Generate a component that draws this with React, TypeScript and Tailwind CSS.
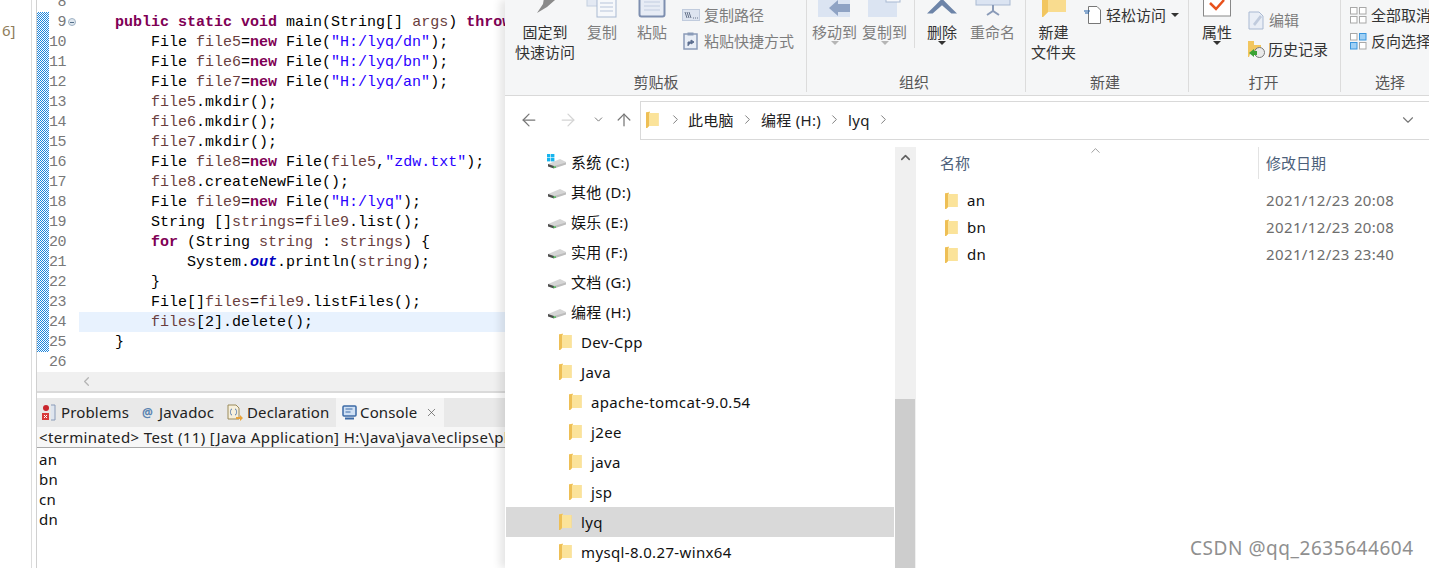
import { ReactNode } from "react";
import { ArrowLeft, ArrowRight, ArrowUp, ChevronDown, ChevronRight, ChevronUp, ChevronLeft, X } from "lucide-react";

const uiFont = "font-['Noto_Sans','Noto_Sans_CJK_SC',sans-serif]";

const Folder = ({ className = "" }: { className?: string }) => (
  <svg width="13" height="18" viewBox="0 0 13 18" className={`shrink-0 ${className}`}>
    <path d="M0 1.5 L4 0.5 L4 2 L12.5 2 L12.5 15 L3 15 L1 17 L0 17 Z" fill="#f3cf72" />
    <path d="M3 2 L12.5 2 L12.5 15 L3 15 Z" fill="#fbe39a" />
    <path d="M0 1.5 L3 1 L3 15 L1 17 L0 17 Z" fill="#eebf55" />
  </svg>
);

const Drive = ({ windows = false }: { windows?: boolean }) => (
  <svg width="20" height="16" viewBox="0 0 20 16" className="shrink-0">
    <path d="M1 10 L13 5 L19 8 L19 10 L7 14 L1 12 Z" fill="#d6d6d6" />
    <path d="M1 10 L7 12 L7 14.5 L1 12.5 Z" fill="#4d4d4d" />
    <path d="M7 12 L19 8.5 L19 10.5 L7 14.5 Z" fill="#bdbdbd" />
    <rect x="6" y="12.5" width="3" height="1.2" fill="#3fb54a" />
    {windows && (
      <g fill="#16b4ee">
        <rect x="0" y="0" width="3.4" height="3.4" />
        <rect x="4" y="0" width="3.4" height="3.4" />
        <rect x="0" y="4" width="3.4" height="3.4" />
        <rect x="4" y="4" width="3.4" height="3.4" />
      </g>
    )}
  </svg>
);

const Caret = ({ gray = false }: { gray?: boolean }) => (
  <span className={`block w-0 h-0 border-x-[4px] border-x-transparent border-t-[4px] ${gray ? "border-t-[#b5b5b5]" : "border-t-[#333]"}`} />
);

const BigButton = ({ lines, icon, width, margin, gray, caret }: { lines: string[]; icon: ReactNode; width: string; margin: string; gray?: boolean; caret?: boolean }) => (
  <div className={`flex flex-col items-center shrink-0 ${width} ${margin}`}>
    <div className="h-[22px] w-full flex justify-center items-start overflow-hidden">{icon}</div>
    {lines.map((l) => (
      <div key={l} className={`h-5 leading-5 whitespace-nowrap ${gray ? "text-[#7d7d7d]" : "text-[#333]"}`}>{l}</div>
    ))}
    {caret && <div className="mt-[-1px]"><Caret gray={gray} /></div>}
  </div>
);

const SmallButton = ({ icon, label, gray, after }: { icon: ReactNode; label: string; gray?: boolean; after?: ReactNode }) => (
  <div className={`flex items-center gap-[4px] whitespace-nowrap ${gray ? "text-[#7d7d7d]" : "text-[#333]"}`}>
    {icon}
    <span className="leading-5">{label}</span>
    {after}
  </div>
);

const Group = ({ width, label, shift = "", children }: { width: string; label: string; shift?: string; children: ReactNode }) => (
  <div className={`shrink-0 h-[92px] flex flex-col border-r border-[#dcdcdc] ${width}`}>
    <div className="h-[72px] flex items-start">{children}</div>
    <div className={`h-5 leading-5 text-center text-[#555] ${shift}`}>{label}</div>
  </div>
);

const Ribbon = () => (
  <div className="h-[96px] shrink-0 bg-[#f5f6f7] border-b border-[#d9d9d9] flex overflow-hidden text-[15px] pl-px">
    <Group width="w-[301px]" label="剪贴板">
      <BigButton
        lines={["固定到", "快速访问"]}
        width="w-[60px]"
        margin="ml-[9px]"
        icon={
          <svg width="24" height="14" viewBox="0 0 24 14">
            <path d="M12 -8 L22 0 L14 7 L4 13 L10 4 Z" fill="#8a8a8a" />
          </svg>
        }
      />
      <BigButton
        lines={["复制"]}
        gray
        width="w-[40px]"
        margin="ml-[7px]"
        icon={
          <svg width="32" height="18" viewBox="0 0 32 18">
            <rect x="1" y="-8" width="20" height="14" fill="#e3e9f3" stroke="#c4cfe0" />
            <rect x="11" y="-4" width="19" height="21" fill="#f6f8fb" stroke="#a9b9d2" />
            <path d="M14 3H27M14 7H27M14 11H27" stroke="#b7c4da" />
          </svg>
        }
      />
      <BigButton
        lines={["粘贴"]}
        gray
        width="w-[40px]"
        margin="ml-[10px]"
        icon={
          <svg width="28" height="18" viewBox="0 0 28 18">
            <rect x="1.5" y="-6" width="25" height="22.5" rx="2" fill="#e7ecf5" stroke="#7e8fb0" strokeWidth="2" />
            <path d="M6 2H22M6 6H22M6 10H22" stroke="#c2cde0" />
          </svg>
        }
      />
      <div className="ml-[10px] flex flex-col gap-[6px] pt-[5px]">
        <SmallButton
          gray
          label="复制路径"
          icon={
            <svg width="18" height="12" viewBox="0 0 18 12">
              <rect x="0.5" y="0.5" width="17" height="11" fill="#dde4f0" stroke="#c0cbdd" />
              <path d="M3 3l2 6M5 3l2 6M7 3l2 6" stroke="#66738a" />
              <path d="M11 9h1M13 9h1M15 9h1" stroke="#66738a" />
            </svg>
          }
        />
        <SmallButton
          gray
          label="粘贴快捷方式"
          icon={
            <svg width="16" height="18" viewBox="0 0 16 18" className="mr-[1px] ml-px">
              <rect x="1" y="2" width="13" height="15" fill="#e9eef6" stroke="#8a9bb8" strokeWidth="1.5" />
              <rect x="4.5" y="0.5" width="6" height="3" fill="#8a9bb8" />
              <path d="M5 14 V10 H9 M8 8 L11 10 L8 12 Z" fill="#5d6f8f" stroke="#5d6f8f" />
            </svg>
          }
        />
      </div>
    </Group>
    <Group width="w-[219px]" label="组织" shift="pr-[4px]">
      <BigButton
        lines={["移动到"]}
        gray
        caret
        width="w-[45px]"
        margin="ml-[5px]"
        icon={
          <svg width="34" height="18" viewBox="0 0 34 18">
            <rect x="0" y="-4" width="32" height="21" fill="#dbe4f2" />
            <path d="M11 8 L20 0 L20 4 L32 4 L32 12 L20 12 L20 16 Z" fill="#8fa3c4" />
          </svg>
        }
      />
      <BigButton
        lines={["复制到"]}
        gray
        caret
        width="w-[45px]"
        margin="ml-[5px]"
        icon={
          <svg width="34" height="18" viewBox="0 0 34 18">
            <rect x="0" y="-4" width="29" height="21" fill="#dbe4f2" />
            <rect x="18" y="-4" width="14" height="6" fill="#f6f8fb" stroke="#a9b9d2" />
          </svg>
        }
      />
      <div className="w-px h-[48px] bg-[#dcdcdc] ml-[7px] shrink-0" />
      <BigButton
        lines={["删除"]}
        caret
        width="w-[30px]"
        margin="ml-[12px]"
        icon={
          <svg width="32" height="15" viewBox="0 0 32 15">
            <path d="M0 14 L9 5 L16 -2 L23 5 L32 14 L26 14 L16 5 L6 14 Z" fill="#6d84a8" />
          </svg>
        }
      />
      <BigButton
        lines={["重命名"]}
        gray
        width="w-[45px]"
        margin="ml-[13px]"
        icon={
          <svg width="36" height="16" viewBox="0 0 36 16">
            <rect x="1" y="-6" width="34" height="11" fill="#dbe4f2" stroke="#a9b9d2" />
            <path d="M18 5V12M12 15L18 11L24 15" stroke="#8a9bb8" strokeWidth="2" fill="none" />
          </svg>
        }
      />
    </Group>
    <Group width="w-[163px]" label="新建" shift="pr-[4px]">
      <BigButton
        lines={["新建", "文件夹"]}
        width="w-[45px]"
        margin="ml-[5px]"
        icon={
          <svg width="24" height="18" viewBox="0 0 24 18">
            <path d="M0 -2 H24 V12 H6 L1 17 H0 Z" fill="#f9dc8f" />
            <path d="M0 -2 H6 V12 L1 17 H0 Z" fill="#f2c65f" />
          </svg>
        }
      />
      <div className="ml-[8px] pt-[5px]">
        <SmallButton
          label="轻松访问"
          after={<span className="ml-[1px]"><Caret /></span>}
          icon={
            <svg width="18" height="20" viewBox="0 0 18 20" className="mr-0">
              <path d="M4.5 1.5 H13 L16.5 5 V18.5 H4.5 Z" fill="#fff" stroke="#777" />
              <path d="M0 6H6M1 8H5" stroke="#1f5ea8" strokeWidth="1" />
            </svg>
          }
        />
      </div>
    </Group>
    <Group width="w-[152px]" label="打开" shift="pr-[2px]">
      <BigButton
        lines={["属性"]}
        caret
        width="w-[30px]"
        margin="ml-[13px]"
        icon={
          <svg width="30" height="18" viewBox="0 0 30 18">
            <rect x="1.5" y="-6" width="27" height="22" fill="#fff" stroke="#888" />
            <path d="M8 3 L14 9 L22 0" stroke="#e8521d" strokeWidth="2.5" fill="none" />
          </svg>
        }
      />
      <div className="ml-[16px] flex flex-col gap-[9px] pt-[10px]">
        <SmallButton
          gray
          label="编辑"
          icon={
            <svg width="16" height="19" viewBox="0 0 16 19" className="mr-[1px]">
              <path d="M1 1 H11 L15 5 V18 H1 Z" fill="#e9eef6" stroke="#a9b9d2" />
              <path d="M5 13 L12 4 L14 6 L7 15 Z" fill="#c0cbdd" />
            </svg>
          }
        />
        <SmallButton
          label="历史记录"
          icon={
            <svg width="17" height="19" viewBox="0 0 17 19" className="mr-[-1px]">
              <path d="M0 1 H6 V5 H13 V12 H3 L1 17 H0 Z" fill="#f2c65f" />
              <circle cx="11.5" cy="12.5" r="5" fill="#e9e9e9" stroke="#777" />
              <path d="M1 13 L6 9 V11 H9 V15 H6 V17 Z" fill="#3aa335" />
            </svg>
          }
        />
      </div>
    </Group>
    <div className="ml-[9px] flex flex-col gap-[6px] pt-[5px] shrink-0 h-[92px] relative">
      <SmallButton
        label="全部取消"
        icon={
          <svg width="17" height="17" viewBox="0 0 17 17">
            <g fill="#fff" stroke="#a8a8a8">
              <rect x="0.5" y="0.5" width="6.5" height="6.5" />
              <rect x="9.5" y="0.5" width="6.5" height="6.5" />
              <rect x="0.5" y="9.5" width="6.5" height="6.5" />
              <rect x="9.5" y="9.5" width="6.5" height="6.5" />
            </g>
          </svg>
        }
      />
      <SmallButton
        label="反向选择"
        icon={
          <svg width="17" height="17" viewBox="0 0 17 17">
            <rect x="0.5" y="0.5" width="6.5" height="6.5" fill="#fff" stroke="#a8a8a8" />
            <rect x="9.5" y="0.5" width="6.5" height="6.5" fill="#9fd0f5" stroke="#3a96dd" />
            <rect x="0.5" y="9.5" width="6.5" height="6.5" fill="#9fd0f5" stroke="#3a96dd" />
            <rect x="9.5" y="9.5" width="6.5" height="6.5" fill="#fff" stroke="#a8a8a8" />
          </svg>
        }
      />
      <div className="absolute left-[25px] top-[72px] h-5 leading-5 text-[#555]">选择</div>
    </div>
  </div>
);

const Crumb = ({ label }: { label: string }) => (
  <>
    <span className="text-[#222] leading-5 tracking-[0.3px]">{label}</span>
    <ChevronRight size={15} strokeWidth={1.5} className="text-[#777] mx-[6px]" />
  </>
);

const AddressBar = () => (
  <div className="h-[51px] shrink-0 flex pt-[5px] bg-white text-[15px]">
    <div className="w-[135px] flex items-center h-[37px] shrink-0 text-[#777]">
      <ArrowLeft size={20} strokeWidth={1.5} className="ml-[14px]" />
      <ArrowRight size={20} strokeWidth={1.5} className="ml-[19px] text-[#d4d4d4]" />
      <ChevronDown size={13} strokeWidth={1.8} className="ml-[14px]" />
      <ArrowUp size={20} strokeWidth={1.5} className="ml-[9px]" />
    </div>
    <div className="flex-1 h-[39px] border border-[#d9d9d9] border-r-0 flex items-center pl-[5px] pb-[2px]">
      <Folder />
      <ChevronRight size={15} strokeWidth={1.5} className="text-[#777] ml-[9px] mr-[5px]" />
      <Crumb label="此电脑" />
      <Crumb label="编程 (H:)" />
      <Crumb label="lyq" />
      <ChevronDown size={18} strokeWidth={1.5} className="ml-auto mr-[12px] text-[#777]" />
    </div>
  </div>
);

const drives = ["系统 (C:)", "其他 (D:)", "娱乐 (E:)", "实用 (F:)", "文档 (G:)", "编程 (H:)"];
const folders = [
  { name: "Dev-Cpp", indent: "pl-[53px]" },
  { name: "Java", indent: "pl-[53px]" },
  { name: "apache-tomcat-9.0.54", indent: "pl-[63px]" },
  { name: "j2ee", indent: "pl-[63px]" },
  { name: "java", indent: "pl-[63px]" },
  { name: "jsp", indent: "pl-[63px]" },
  { name: "lyq", indent: "pl-[53px]", selected: true },
  { name: "mysql-8.0.27-winx64", indent: "pl-[53px]" },
];

const NavPane = () => (
  <div className="w-[410px] shrink-0 flex text-[15px] text-[#111]">
    <div className="w-[388px] ml-px shrink-0">
      {drives.map((d, i) => (
        <div key={d} className="h-[30px] flex items-center pl-[41px] gap-[4px]">
          <Drive windows={i === 0} />
          <span className="tracking-[0.3px]">{d}</span>
        </div>
      ))}
      {folders.map((f) => (
        <div key={f.name} className={`h-[30px] flex items-center gap-[9px] ${f.indent} ${f.selected ? "bg-[#d9d9d9]" : ""}`}>
          <Folder />
          <span className="tracking-[0.35px]">{f.name}</span>
        </div>
      ))}
    </div>
    <div className="w-[20px] ml-[1px] shrink-0 bg-[#f0f0f0] flex flex-col items-center">
      <ChevronUp size={15} strokeWidth={2.5} className="text-[#606060] mt-[3px]" />
      <div className="w-full mt-[234px] flex-1 bg-[#cdcdcd]" />
    </div>
  </div>
);

const files = [
  { name: "an", date: "2021/12/23 20:08" },
  { name: "bn", date: "2021/12/23 20:08" },
  { name: "dn", date: "2021/12/23 23:40" },
];

const FileList = () => (
  <div className="flex-1 text-[15px] border-l border-[#f0f0f0]">
    <div className="h-[32px] flex relative">
      <div className="w-[343px] border-r border-[#e3e3e3] pl-[24px] pt-[6px] text-[#4c607a] leading-5 shrink-0">名称</div>
      <ChevronUp size={15} strokeWidth={1} className="absolute left-[172px] top-[-4px] text-[#666]" />
      <div className="pl-[7px] pt-[6px] text-[#4c607a] leading-5 whitespace-nowrap">修改日期</div>
    </div>
    <div className="pt-[8px]">
      {files.map((f) => (
        <div key={f.name} className="h-[27px] flex items-center">
          <div className="w-[350px] flex items-center gap-[9px] pl-[29px] shrink-0 text-[#111]">
            <Folder />
            <span className="tracking-[0.35px]">{f.name}</span>
          </div>
          <span className="text-[#6d6d6d] whitespace-nowrap tracking-[0.38px]">{f.date}</span>
        </div>
      ))}
    </div>
  </div>
);

const K = ({ children }: { children: ReactNode }) => <span className="text-[#7f0055] font-bold">{children}</span>;
const S = ({ children }: { children: ReactNode }) => <span className="text-[#2a00ff]">{children}</span>;
const V = ({ children }: { children: ReactNode }) => <span className="text-[#6a3e3e]">{children}</span>;

const code: { n: number; c: ReactNode }[] = [
  { n: 8, c: "" },
  { n: 9, c: <>    <K>public</K> <K>static</K> <K>void</K> main(String[] <V>args</V>) <K>throws</K> IOException {"{"}</> },
  { n: 10, c: <>        File <V>file5</V>=<K>new</K> File(<S>"H:/lyq/dn"</S>);</> },
  { n: 11, c: <>        File <V>file6</V>=<K>new</K> File(<S>"H:/lyq/bn"</S>);</> },
  { n: 12, c: <>        File <V>file7</V>=<K>new</K> File(<S>"H:/lyq/an"</S>);</> },
  { n: 13, c: <>        <V>file5</V>.mkdir();</> },
  { n: 14, c: <>        <V>file6</V>.mkdir();</> },
  { n: 15, c: <>        <V>file7</V>.mkdir();</> },
  { n: 16, c: <>        File <V>file8</V>=<K>new</K> File(<V>file5</V>,<S>"zdw.txt"</S>);</> },
  { n: 17, c: <>        <V>file8</V>.createNewFile();</> },
  { n: 18, c: <>        File <V>file9</V>=<K>new</K> File(<S>"H:/lyq"</S>);</> },
  { n: 19, c: <>        String []<V>strings</V>=<V>file9</V>.list();</> },
  { n: 20, c: <>        <K>for</K> (String <V>string</V> : <V>strings</V>) {"{"}</> },
  { n: 21, c: <>            System.<span className="text-[#0000c0] font-bold italic">out</span>.println(<V>string</V>);</> },
  { n: 22, c: <>        {"}"}</> },
  { n: 23, c: <>        File[]<V>files</V>=<V>file9</V>.listFiles();</> },
  { n: 24, c: <>        <V>files</V>[2].delete();</> },
  { n: 25, c: <>    {"}"}</> },
  { n: 26, c: "" },
];

const Editor = () => (
  <div className="h-[372px] shrink-0 overflow-hidden">
    <div className="-mt-2 font-['Liberation_Mono',monospace] text-[15px] leading-5">
      {code.map((l) => (
        <div key={l.n} className="h-5 flex">
          <div className={`w-3 shrink-0 ${l.n >= 9 && l.n <= 25 ? "bg-[repeating-conic-gradient(#1f86dc_0_25%,#ffffff_0_50%)] bg-[length:2px_2px]" : ""}`} />
          <div className="w-[17px] shrink-0 text-[#787878] whitespace-nowrap flex justify-end">
            <span className="tracking-[-0.5px] translate-y-px">{l.n}</span>
          </div>
          <div className="w-[12px] shrink-0 flex items-center justify-center">
            {l.n === 9 && <span className="block w-[8px] h-[8px] rounded-full border border-[#9fb2c4] bg-[#dfe7ef] relative before:absolute before:left-[1px] before:top-[2.5px] before:w-1 before:h-px before:bg-[#55708a] before:content-['']" />}
          </div>
          <div className="w-[1px] shrink-0" />
          <pre className={`flex-1 font-['Liberation_Mono',monospace] text-black ${l.n === 24 ? "bg-[#e8f2fe]" : ""}`}>
            <span className="block translate-y-px">{l.c}</span>
          </pre>
        </div>
      ))}
    </div>
  </div>
);

const Tabs = () => (
  <div className={`h-[29px] shrink-0 bg-[#e9e9e9] flex items-center text-[15px] text-[#222] tracking-[0.15px] ${uiFont}`}>
    <svg width="16" height="17" viewBox="0 0 16 17" className="ml-1 shrink-0">
      <rect x="1" y="9" width="7" height="7" fill="#d83b3b" />
      <path d="M3 11l3 3M6 11l-3 3" stroke="#fff" />
      <circle cx="5" cy="4" r="3" fill="#c9252c" />
      <path d="M10 1h4v15h-4" fill="#dfe5ee" stroke="#8a9bb8" />
    </svg>
    <span className="ml-[4px] w-[73px]">Problems</span>
    <span className="ml-[8px] w-[17px] text-[#5b84b1] text-[12px] font-bold">@</span>
    <span className="w-[68px]">Javadoc</span>
    <svg width="16" height="17" viewBox="0 0 16 17" className="shrink-0">
      <path d="M1 1h8l3 3v11H1z" fill="#f7f0dc" stroke="#9a8a5a" />
      <path d="M5 5c-2 0-1 3-2 3c1 0 0 3 2 3M8 5c2 0 1 3 2 3c-1 0 0 3-2 3" stroke="#5b7fb0" fill="none" />
      <path d="M9 13h4v-2l3 3-3 3v-2H9z" fill="#e8a33a" />
    </svg>
    <span className="ml-[4px] w-[89px]">Declaration</span>
    <div className="h-full w-[108px] bg-[#f5f5f5] flex items-center shrink-0 pl-[6px]">
      <svg width="15" height="15" viewBox="0 0 15 15" className="shrink-0">
        <rect x="1" y="1" width="13" height="10" rx="1" fill="#cfe0f4" stroke="#3c6aa5" strokeWidth="1.5" />
        <path d="M3.5 4h7M3.5 7h5" stroke="#3c6aa5" />
        <rect x="3" y="12.5" width="9" height="2" fill="#3c6aa5" />
      </svg>
      <span className="ml-[3px]">Console</span>
      <X size={13} strokeWidth={1.3} className="ml-[8px] text-[#555]" />
    </div>
  </div>
);

const Console = () => (
  <div className={`flex-1 min-h-0 text-[15px] text-[#111] ${uiFont}`}>
    <div className="h-[21px] leading-5 pl-[2px] bg-[#f7f7f7] border-b border-[#a8a8a8] whitespace-nowrap overflow-hidden text-[#222] tracking-[0.38px]">
      {"<terminated> Test (11) [Java Application] H:\\Java\\java\\eclipse\\plugins"}
    </div>
    <div className="pt-[1px] pl-[2px] tracking-[0.3px]">
      {["an", "bn", "cn", "dn"].map((t) => (
        <div key={t} className="h-5 leading-5">{t}</div>
      ))}
    </div>
  </div>
);

const Eclipse = () => (
  <div className="w-[505px] shrink-0 h-full flex overflow-hidden bg-white">
    <div className="w-[31px] shrink-0 pt-[20px] pl-[2px] text-[15px] leading-5 text-[#8f7d5a]">6]</div>
    <div className="w-px shrink-0 bg-[#dcdcdc]" />
    <div className="w-1 shrink-0" />
    <div className="flex-1 min-w-0 flex flex-col border-l border-[#d0d0d0]">
      <Editor />
      <div className="h-[19px] shrink-0 bg-[#f0f0f0] flex items-center">
        <ChevronLeft size={15} strokeWidth={2} className="ml-[42px] text-[#b5b5b5]" />
      </div>
      <div className="h-[2px] shrink-0 bg-[#dadada]" />
      <div className="h-[5px] shrink-0" />
      <Tabs />
      <Console />
    </div>
  </div>
);

export default function App() {
  return (
    <div className={`relative w-[1429px] h-[568px] overflow-hidden flex bg-white ${uiFont}`}>
      <Eclipse />
      <div className="relative z-10 flex-1 min-w-0 flex flex-col bg-white shadow-[-5px_0_8px_rgba(0,0,0,0.1)]">
        <Ribbon />
        <AddressBar />
        <div className="flex-1 min-h-0 flex overflow-hidden">
          <NavPane />
          <FileList />
        </div>
      </div>
      <div className="absolute z-20 left-[1190px] top-[537px] text-[19px] leading-[22px] tracking-[0.55px] text-[#8f8f8f] whitespace-nowrap">CSDN @qq_2635644604</div>
    </div>
  );
}
